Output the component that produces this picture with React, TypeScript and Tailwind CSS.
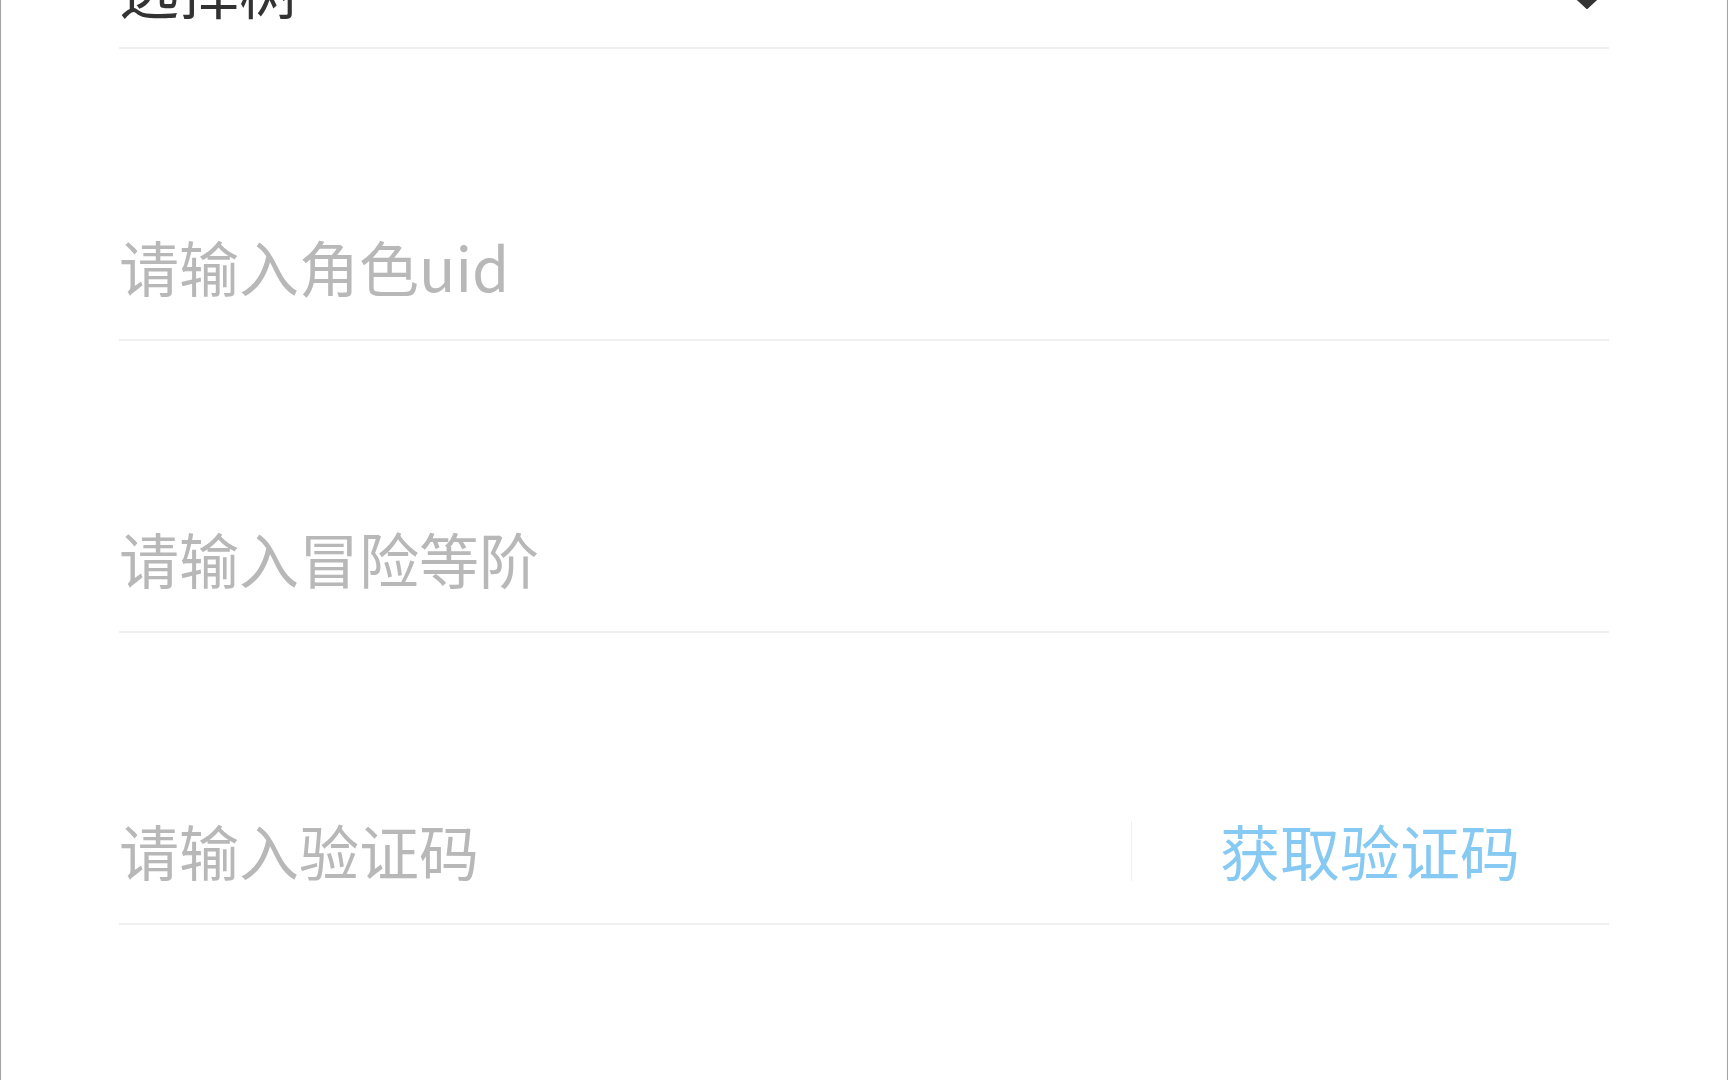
function Row({ children, last }: { children: React.ReactNode; last?: string }) {
  return (
    <div className={`flex h-[292px] items-end border-b-2 border-[#efefef] ${last ?? "pb-[43px]"}`}>
      {children}
    </div>
  );
}

export default function App() {
  return (
    <div className="h-[1080px] overflow-hidden border-x border-[#a3a3a3] bg-white font-['Noto_Sans_CJK_SC',sans-serif]">
      <div className="mx-[118px] mt-[-243px]">
        <Row last="pb-[29px]">
          <span className="flex-1 text-[60px] leading-[60px] text-[#333333]">选择树</span>
          <svg width="26" height="16" viewBox="0 0 26 16" className="mb-[6px] mr-[9px]">
            <path d="M0 0 L13 12 L26 0 Z" fill="#333333" stroke="#333333" strokeWidth="2" strokeLinejoin="round" />
          </svg>
        </Row>
        <Row>
          <span className="text-[60px] leading-[60px] text-[#b8b8b8]">请输入角色uid</span>
        </Row>
        <Row>
          <span className="text-[60px] leading-[60px] text-[#b8b8b8]">请输入冒险等阶</span>
        </Row>
        <Row>
          <span className="flex-1 text-[60px] leading-[60px] text-[#b8b8b8]">请输入验证码</span>
          <div className="mb-[-1px] h-[60px] w-px bg-[#f0f0f0]" />
          <span className="ml-[88px] mr-[89px] text-[60px] leading-[60px] text-[#86c9f3]">获取验证码</span>
        </Row>
      </div>
    </div>
  );
}
